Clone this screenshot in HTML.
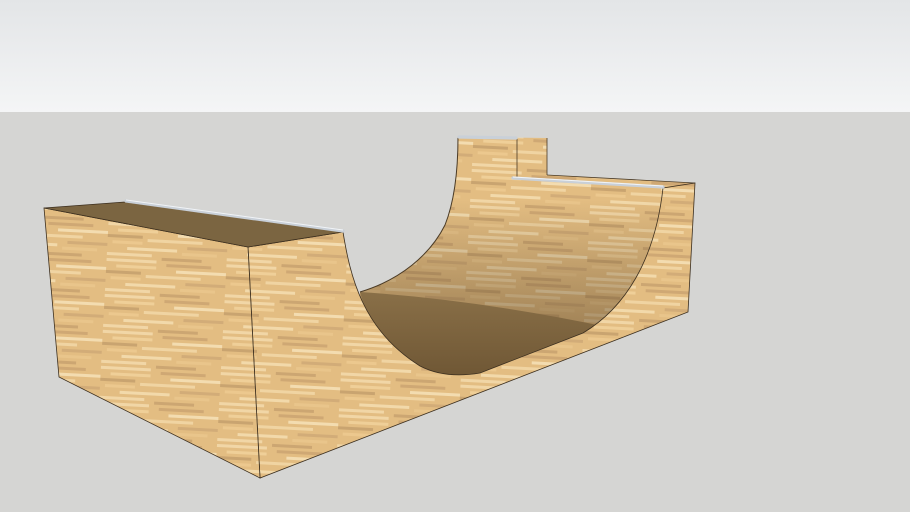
<!DOCTYPE html>
<html><head><meta charset="utf-8"><style>
html,body{margin:0;padding:0;width:910px;height:512px;overflow:hidden;background:#d5d5d3}
svg{display:block}
</style></head><body>
<svg width="910" height="512" viewBox="0 0 910 512" xmlns="http://www.w3.org/2000/svg">
<defs>
<linearGradient id="sky" x1="0" y1="0" x2="0" y2="1">
<stop offset="0" stop-color="#e3e5e7"/><stop offset="1" stop-color="#f4f5f6"/>
</linearGradient>
<pattern id="wood" width="120" height="36" patternUnits="userSpaceOnUse" patternTransform="rotate(3)">
<rect width="120" height="36" fill="#e3bd82"/>
<rect x="0" y="0" width="50" height="3" fill="#f1d6a6"/>
<rect x="60" y="3" width="45" height="3" fill="#cfa874"/>
<rect x="10" y="6" width="40" height="3" fill="#efcf98"/>
<rect x="70" y="9" width="50" height="3" fill="#f3dcb0"/>
<rect x="0" y="12" width="35" height="3" fill="#c9a470"/>
<rect x="40" y="15" width="55" height="3" fill="#f0d4a2"/>
<rect x="5" y="18" width="30" height="3" fill="#ecc88e"/>
<rect x="80" y="21" width="40" height="3" fill="#d2ac78"/>
<rect x="20" y="24" width="50" height="3" fill="#f2d9aa"/>
<rect x="75" y="27" width="35" height="3" fill="#e9c58b"/>
<rect x="0" y="30" width="45" height="3" fill="#f1d6a6"/>
<rect x="55" y="33" width="40" height="3" fill="#cca672"/>
</pattern>
<linearGradient id="shade" gradientUnits="userSpaceOnUse" x1="0" y1="200" x2="0" y2="320">
<stop offset="0" stop-color="#5a4428" stop-opacity="0"/>
<stop offset="1" stop-color="#5a4428" stop-opacity="0.45"/>
</linearGradient>
<linearGradient id="floorg" gradientUnits="userSpaceOnUse" x1="0" y1="290" x2="0" y2="380">
<stop offset="0" stop-color="#8a7048"/>
<stop offset="1" stop-color="#6e5634"/>
</linearGradient>
</defs>
<rect width="910" height="112" fill="url(#sky)"/>
<rect y="112" width="910" height="400" fill="#d5d5d3"/>

<!-- back ramp -->
<path d="M458,137 L547,138 L547,175 L695,183 L688,312 L470,390 L360,390 L360,292 C400,280 430,255 445,225 C455,200 458,170 458,137 Z" fill="url(#wood)"/>
<path d="M458,137 L547,138 L547,175 L695,183 L688,312 L470,390 L360,390 L360,292 C400,280 430,255 445,225 C455,200 458,170 458,137 Z" fill="url(#shade)"/>
<path d="M360,292 Q480,300 612,328 L583,345 L470,380 L380,360 Z" fill="url(#floorg)"/>
<path d="M458,137 C458,170 455,200 445,225 C430,255 400,280 360,292" fill="none" stroke="#4a3a25" stroke-width="1"/>
<path d="M517,138 L517,177 M547,138 L547,175" stroke="#4a3a25" stroke-width="0.8"/>
<path d="M547,175 L695,183" stroke="#4a3a25" stroke-width="0.8"/>

<!-- front face -->
<path d="M248,247 L343,232 C350,275 362,330 420,366 Q445,379 480,373 L583,333 C625,308 655,260 663,188 L695,183 L688,312 L260,478 Z" fill="url(#wood)" stroke="#3c2f1f" stroke-width="0.8"/>
<!-- left face -->
<path d="M44,208 L248,247 L260,478 L59,377 Z" fill="url(#wood)" stroke="#3c2f1f" stroke-width="0.8"/>
<!-- top -->
<path d="M44,208 L125,202 L343,232 L248,247 Z" fill="#7b6541" stroke="#3c2f1f" stroke-width="0.8"/>

<!-- rails -->
<line x1="126" y1="201" x2="343" y2="231" stroke="#c9d0d8" stroke-width="3.2" stroke-linecap="round"/>
<line x1="126" y1="200" x2="343" y2="230" stroke="#f2f4f6" stroke-width="1"/>
<line x1="459" y1="137" x2="516" y2="138" stroke="#c9d0d8" stroke-width="3.2" stroke-linecap="round"/>
<line x1="513" y1="178" x2="663" y2="187" stroke="#c9d0d8" stroke-width="3.2" stroke-linecap="round"/>
<line x1="513" y1="177" x2="663" y2="186" stroke="#f2f4f6" stroke-width="1"/>
</svg>
</body></html>
